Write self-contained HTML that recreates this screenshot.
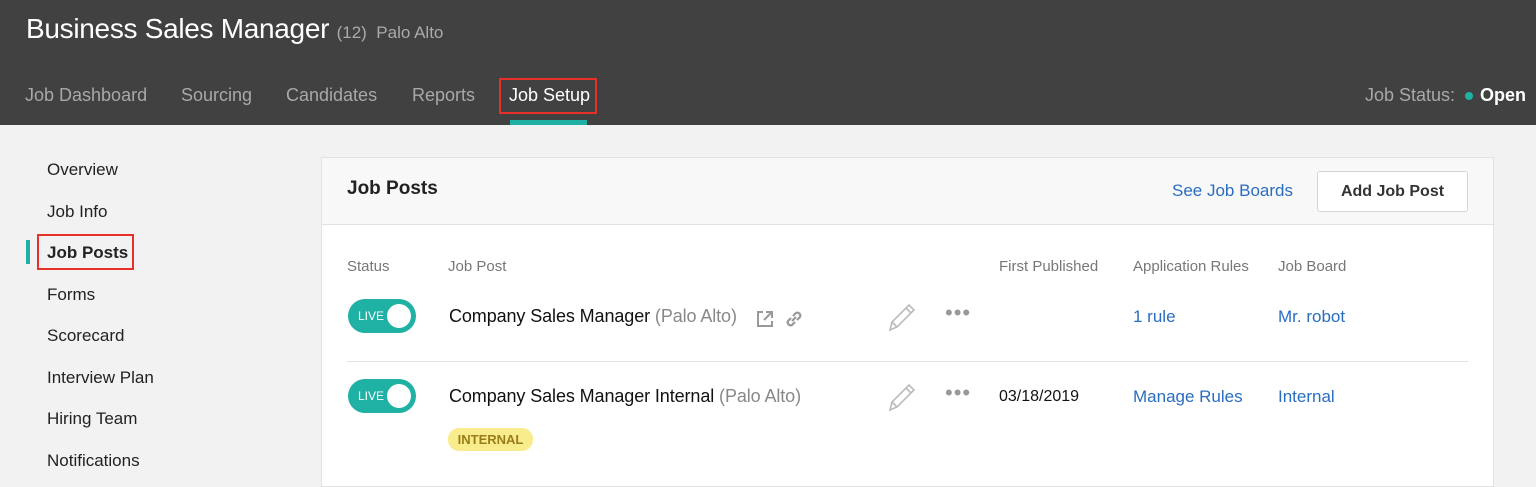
<!DOCTYPE html>
<html><head><style>
*{margin:0;padding:0;box-sizing:border-box}
body{width:1536px;height:477px;overflow:hidden;background:#f2f2f2;font-family:"Liberation Sans",sans-serif;position:relative}
.hdr{position:absolute;left:0;top:0;width:1536px;height:125px;background:#414141}
.a{position:absolute;white-space:nowrap}
.title{left:26px;top:13px;font-size:28px;color:#fff;letter-spacing:-0.3px}
.title span{font-size:17px;color:#aaa;letter-spacing:0}
.nav{top:85px;font-size:18px;color:#a8a8a8}
.side{left:47px;font-size:17px;color:#222}
.card{position:absolute;left:321px;top:157px;width:1173px;height:330px;background:#fff;border:1px solid #e2e2e2}
.ch{position:absolute;left:0;top:0;width:100%;height:67px;background:#f8f8f8;border-bottom:1px solid #e2e2e2}
.th{top:258px;font-size:15px;color:#777}
.link{color:#2a6dc0;font-size:17px}
.tog{position:absolute;left:348px;width:68px;height:34px;border-radius:17px;background:#1fb1a3}
.tog b{position:absolute;left:10px;top:10px;font-size:12px;color:#fff;font-weight:normal}
.tog i{position:absolute;right:5px;top:5px;width:24px;height:24px;border-radius:50%;background:#fff}
.jp{font-size:18px;color:#111;letter-spacing:-0.1px}
.jp span{color:#888}
.dots{font-size:22px;color:#999;letter-spacing:1px}
</style></head><body>
<div class="hdr"></div>
<div class="a title">Business Sales Manager <span>(12)&nbsp; Palo Alto</span></div>
<div class="a nav" style="left:25px">Job Dashboard</div>
<div class="a nav" style="left:181px">Sourcing</div>
<div class="a nav" style="left:286px">Candidates</div>
<div class="a nav" style="left:412px">Reports</div>
<div class="a nav" style="left:509px;color:#fff">Job Setup</div>
<div class="a" style="left:499px;top:78px;width:98px;height:36px;border:2px solid #e8302a"></div>
<div class="a" style="left:510px;top:120px;width:77px;height:5px;background:#1fb1a3"></div>
<div class="a nav" style="left:1365px;color:#a8a8a8">Job Status:</div>
<div class="a" style="left:1465px;top:92px;width:8px;height:8px;border-radius:50%;background:#1fb1a3"></div>
<div class="a nav" style="left:1480px;color:#fff;font-weight:bold">Open</div>

<div class="a side" style="top:160px">Overview</div>
<div class="a side" style="top:202px">Job Info</div>
<div class="a side" style="top:243px;font-weight:bold">Job Posts</div>
<div class="a" style="left:26px;top:240px;width:4px;height:24px;background:#1fb1a3"></div>
<div class="a" style="left:37px;top:234px;width:97px;height:36px;border:2px solid #e8302a"></div>
<div class="a side" style="top:285px">Forms</div>
<div class="a side" style="top:326px">Scorecard</div>
<div class="a side" style="top:368px">Interview Plan</div>
<div class="a side" style="top:409px">Hiring Team</div>
<div class="a side" style="top:451px">Notifications</div>

<div class="card"><div class="ch"></div></div>
<div class="a" style="left:347px;top:178px;font-size:19px;font-weight:bold;color:#222">Job Posts</div>
<div class="a link" style="left:1172px;top:181px">See Job Boards</div>
<div class="a" style="left:1317px;top:171px;width:151px;height:41px;border:1px solid #d5d5d5;border-radius:3px;background:#fff;font-size:16px;font-weight:bold;color:#333;text-align:center;line-height:39px">Add Job Post</div>

<div class="a th" style="left:347px">Status</div>
<div class="a th" style="left:448px">Job Post</div>
<div class="a th" style="left:999px">First Published</div>
<div class="a th" style="left:1133px">Application Rules</div>
<div class="a th" style="left:1278px">Job Board</div>

<div class="tog" style="top:299px"><b>LIVE</b><i></i></div>
<div class="a jp" style="left:449px;top:306px">Company Sales Manager <span>(Palo Alto)</span></div>
<svg class="a" style="left:755px;top:309px" width="20" height="20" viewBox="0 0 20 20" fill="none" stroke="#999" stroke-width="2"><path d="M8 3H3v14h14v-5M11 3h6v6M17 3l-8 8"/></svg>
<svg class="a" style="left:782px;top:307px" width="24" height="24" viewBox="0 0 24 24" fill="none" stroke="#999" stroke-width="2.2"><path d="M10 14l4-4M9 11l-3 3a3 3 0 004 4l3-3M15 13l3-3a3 3 0 00-4-4l-3 3"/></svg>
<svg class="a" style="left:884px;top:299px" width="36" height="36" viewBox="0 0 36 36" fill="none" stroke="#bbb" stroke-width="1.6"><path d="M6 31l2-8L25 6l5 5-17 17zM8 23l5 5M22 9l5 5"/></svg>
<div class="a dots" style="left:945px;top:300px">•••</div>
<div class="a link" style="left:1133px;top:307px">1 rule</div>
<div class="a link" style="left:1278px;top:307px">Mr. robot</div>

<div class="a" style="left:347px;top:361px;width:1121px;height:1px;background:#e2e2e2"></div>

<div class="tog" style="top:379px"><b>LIVE</b><i></i></div>
<div class="a jp" style="left:449px;top:386px">Company Sales Manager Internal <span>(Palo Alto)</span></div>
<svg class="a" style="left:884px;top:379px" width="36" height="36" viewBox="0 0 36 36" fill="none" stroke="#bbb" stroke-width="1.6"><path d="M6 31l2-8L25 6l5 5-17 17zM8 23l5 5M22 9l5 5"/></svg>
<div class="a dots" style="left:945px;top:380px">•••</div>
<div class="a" style="left:999px;top:388px;font-size:16px;color:#111">03/18/2019</div>
<div class="a link" style="left:1133px;top:387px">Manage Rules</div>
<div class="a link" style="left:1278px;top:387px">Internal</div>
<div class="a" style="left:448px;top:428px;width:85px;height:23px;border-radius:11px;background:#f8ec8c;color:#9a7d1a;font-size:13px;font-weight:bold;text-align:center;line-height:23px">INTERNAL</div>
</body></html>
